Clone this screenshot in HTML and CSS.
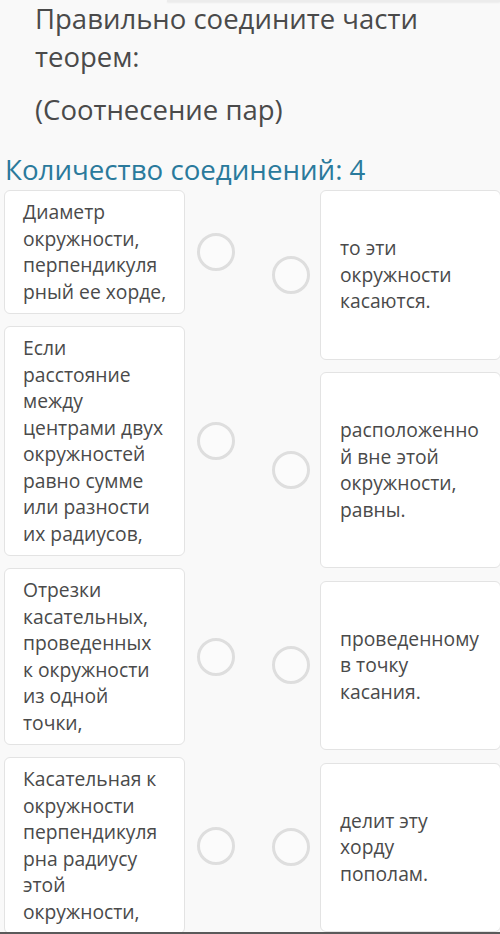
FILE: index.html
```html
<!DOCTYPE html>
<html lang="ru">
<head>
    <meta charset="UTF-8">
    <meta name="viewport" content="width=device-width, initial-scale=1.0">
    <title>Соотнесение пар</title>
    <link rel="stylesheet" href="styles.css">
</head>
<body>
    <div class="top-edge"></div>

    <div class="question">
        <p class="question-title">Правильно соедините части теорем:</p>
        <p class="question-hint">(Соотнесение пар)</p>
    </div>

    <h2 class="count">Количество соединений: 4</h2>

    <div class="match">
        <div class="col col-left">
            <div class="pair">
                <div class="card">Диаметр<br>окружности,<br>перпендикуля<br>рный ее хорде,</div>
                <span class="dot"></span>
            </div>
            <div class="pair">
                <div class="card">Если<br>расстояние<br>между<br>центрами двух<br>окружностей<br>равно сумме<br>или разности<br>их радиусов,</div>
                <span class="dot"></span>
            </div>
            <div class="pair">
                <div class="card">Отрезки<br>касательных,<br>проведенных<br>к окружности<br>из одной<br>точки,</div>
                <span class="dot"></span>
            </div>
            <div class="pair">
                <div class="card">Касательная к<br>окружности<br>перпендикуля<br>рна радиусу<br>этой<br>окружности,</div>
                <span class="dot"></span>
            </div>
        </div>

        <div class="col col-right">
            <div class="pair">
                <span class="dot"></span>
                <div class="card">то эти<br>окружности<br>касаются.</div>
            </div>
            <div class="pair">
                <span class="dot"></span>
                <div class="card">расположенно<br>й вне этой<br>окружности,<br>равны.</div>
            </div>
            <div class="pair">
                <span class="dot"></span>
                <div class="card">проведенному<br>в точку<br>касания.</div>
            </div>
            <div class="pair">
                <span class="dot"></span>
                <div class="card">делит эту<br>хорду<br>пополам.</div>
            </div>
        </div>
    </div>
</body>
</html>
```

FILE: styles.css
```css
* {
    margin: 0;
    padding: 0;
    box-sizing: border-box;
    font-family: 'Open Sans', 'Noto Sans', sans-serif;
}

body {
    height: 100vh;
    overflow: hidden;
    background: #f9f9f9;
    color: #4a4a4a;
    border-bottom: 2px solid #5a5a5a;
}

.top-edge {
    height: 2px;
    margin-left: 167px;
    background: #ececec;
    box-shadow: 0 1px 2px rgba(0, 0, 0, 0.06);
    margin-bottom: -2px;
}

.question {
    padding: 0 30px 0 35px;
}

.question-title {
    font-size: 27.5px;
    line-height: 38px;
}

.question-hint {
    font-size: 27.5px;
    line-height: 38px;
    margin-top: 15px;
}

.count {
    font-size: 27.7px;
    font-weight: 400;
    line-height: 38px;
    color: #2a7a9c;
    padding-left: 5px;
    margin-top: 21px;
    margin-bottom: 2px;
}

.match {
    display: flex;
    gap: 37px;
    padding-left: 4px;
}

.col {
    display: flex;
    flex-direction: column;
}

.col-left {
    gap: 12px;
}

.col-right {
    gap: 12.5px;
}

.pair {
    display: flex;
    align-items: center;
}

.col-left .pair {
    gap: 12px;
}

.col-right .pair {
    gap: 10px;
}

.card {
    flex: none;
    width: 181px;
    background: #fff;
    border: 1px solid #e3e3e3;
    border-radius: 6px;
    font-size: 19.3px;
    line-height: 26.5px;
    white-space: nowrap;
}

.col-left .card {
    padding: 8px 10px 8px 18px;
}

.col-right .card {
    padding: 44px 10px 44px 19px;
}

.dot {
    flex: none;
    width: 38px;
    height: 38px;
    border: 3px solid #dedede;
    border-radius: 50%;
    background: #fbfbfb;
}
```
